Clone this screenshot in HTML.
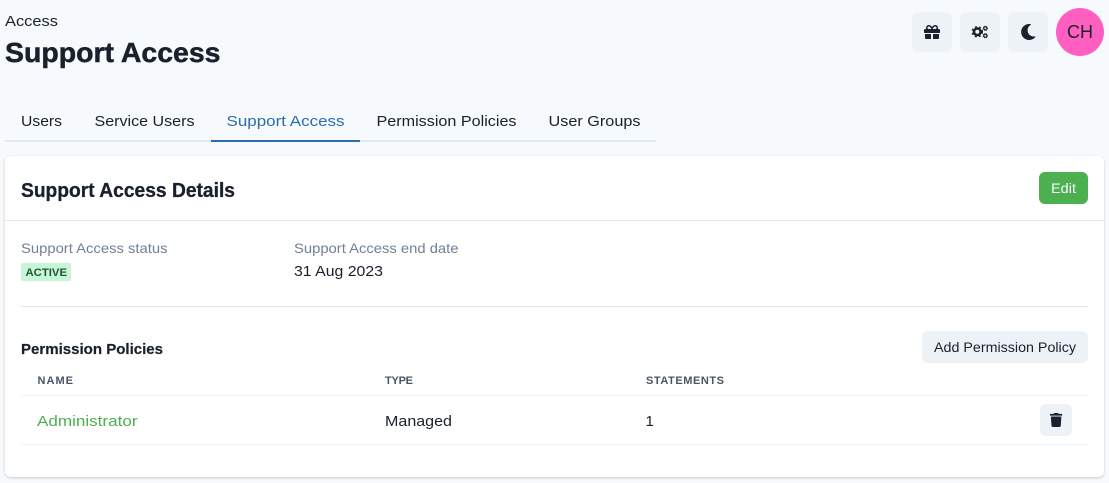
<!DOCTYPE html>
<html><head><meta charset="utf-8"><title>Support Access</title>
<style>
html,body{margin:0;padding:0;width:1109px;height:483px;overflow:hidden;background:#f7fafc;font-family:"Liberation Sans",sans-serif}
.b{position:absolute}
svg{position:absolute;left:0;top:0}
text{font-family:"Liberation Sans",sans-serif}
</style></head><body>
<div class="b" style="left:5px;top:156px;width:1099px;height:321px;background:#fff;border-radius:6px;box-shadow:0 1px 3px rgba(0,0,0,.14),0 1px 2px rgba(0,0,0,.06)"></div>
<div class="b" style="left:912px;top:12px;width:40px;height:40px;background:#edf2f7;border-radius:6px"></div>
<div class="b" style="left:960px;top:12px;width:40px;height:40px;background:#edf2f7;border-radius:6px"></div>
<div class="b" style="left:1008px;top:12px;width:40px;height:40px;background:#edf2f7;border-radius:6px"></div>
<div class="b" style="left:1056px;top:8px;width:48px;height:48px;background:#ff5fc0;border-radius:50%"></div>
<div class="b" style="left:5px;top:140px;width:651px;height:2px;background:#e2e8f0"></div>
<div class="b" style="left:211px;top:140px;width:149px;height:2px;background:#2b6cb0"></div>
<div class="b" style="left:5px;top:220px;width:1099px;height:1px;background:#e2e8f0"></div>
<div class="b" style="left:21px;top:306px;width:1067px;height:1px;background:#e2e8f0"></div>
<div class="b" style="left:21px;top:395px;width:1067px;height:1px;background:#edf2f7"></div>
<div class="b" style="left:21px;top:444px;width:1067px;height:1px;background:#edf2f7"></div>
<div class="b" style="left:1039px;top:172px;width:49px;height:32px;background:#4caf50;border-radius:6px"></div>
<div class="b" style="left:21px;top:263px;width:50px;height:18px;background:#c6f6d5;border-radius:2px"></div>
<div class="b" style="left:922px;top:331px;width:166px;height:32px;background:#edf2f7;border-radius:6px"></div>
<div class="b" style="left:1040px;top:404px;width:32px;height:32px;background:#edf2f7;border-radius:6px"></div>
<svg width="1109" height="483" viewBox="0 0 1109 483" xmlns="http://www.w3.org/2000/svg">
<g fill="#1a202c">
<text x="5" y="26" font-size="15" textLength="53" lengthAdjust="spacingAndGlyphs">Access</text>
<text x="5" y="62" font-size="28" font-weight="700" stroke="#1a202c" stroke-width=".5" textLength="215.500" lengthAdjust="spacingAndGlyphs">Support Access</text>
<text x="21" y="126" font-size="15" textLength="41" lengthAdjust="spacingAndGlyphs">Users</text>
<text x="94.500" y="126" font-size="15" textLength="100" lengthAdjust="spacingAndGlyphs">Service Users</text>
<text x="376.500" y="126" font-size="15" textLength="140" lengthAdjust="spacingAndGlyphs">Permission Policies</text>
<text x="548.500" y="126" font-size="15" textLength="92" lengthAdjust="spacingAndGlyphs">User Groups</text>
<text x="21" y="197" font-size="20" font-weight="700" stroke="#1a202c" stroke-width=".3" textLength="214" lengthAdjust="spacingAndGlyphs">Support Access Details</text>
<text x="294" y="276" font-size="15" textLength="89" lengthAdjust="spacingAndGlyphs">31 Aug 2023</text>
<text x="21" y="354" font-size="15" font-weight="700" stroke="#1a202c" stroke-width=".2" textLength="142" lengthAdjust="spacingAndGlyphs">Permission Policies</text>
<text x="934" y="352" font-size="14" textLength="142" lengthAdjust="spacingAndGlyphs">Add Permission Policy</text>
<text x="385" y="426" font-size="15" textLength="67" lengthAdjust="spacingAndGlyphs">Managed</text>
<text x="645.500" y="426" font-size="15">1</text>
<text x="1067" y="38" font-size="18" textLength="26" lengthAdjust="spacingAndGlyphs">CH</text>
</g>
<text x="226.500" y="126" font-size="15" fill="#2b6cb0" textLength="118" lengthAdjust="spacingAndGlyphs">Support Access</text>
<text x="1051" y="193" font-size="14" fill="#f7fafc" textLength="25" lengthAdjust="spacingAndGlyphs">Edit</text>
<text x="21" y="253" font-size="14" fill="#718096" textLength="146.500" lengthAdjust="spacingAndGlyphs">Support Access status</text>
<text x="294" y="253" font-size="14" fill="#718096" textLength="164.500" lengthAdjust="spacingAndGlyphs">Support Access end date</text>
<text x="25.500" y="276" font-size="11" font-weight="700" fill="#22543d" textLength="41.500" lengthAdjust="spacingAndGlyphs">ACTIVE</text>
<g fill="#4a5568" font-size="11" font-weight="700">
<text x="37.500" y="384" textLength="35.500" lengthAdjust="spacing">NAME</text>
<text x="385" y="384" textLength="28" lengthAdjust="spacing">TYPE</text>
<text x="646" y="384" textLength="78" lengthAdjust="spacing">STATEMENTS</text>
</g>
<text x="37" y="426" font-size="15" fill="#4caf50" textLength="100.500" lengthAdjust="spacingAndGlyphs">Administrator</text>

<svg x="924" y="24" width="16" height="16" viewBox="0 0 512 512"><path fill="#1a202c" d="M32 448c0 17.700 14.300 32 32 32h160V320H32v128zm256 32h160c17.700 0 32-14.300 32-32V320H288v160zm192-320h-42.100c6.200-12.100 10.100-25.500 10.100-40 0-48.500-39.500-88-88-88-41.600 0-68.500 21.300-103 68.300-34.500-47-61.400-68.300-103-68.300-48.500 0-88 39.500-88 88 0 14.500 3.800 27.900 10.100 40H32c-17.700 0-32 14.300-32 32v80c0 8.800 7.200 16 16 16h480c8.800 0 16-7.200 16-16v-80c0-17.700-14.300-32-32-32zm-326.100 0c-22.100 0-40-17.900-40-40s17.900-40 40-40c19.900 0 34.600 3.300 86.100 80h-86.100zm206.100 0h-86.100c51.400-76.500 65.700-80 86.100-80 22.100 0 40 17.900 40 40s-17.900 40-40 40z"/></svg>

<g fill="none" stroke="#1a202c">
<circle cx="977.300" cy="31.800" r="3.300" stroke-width="2.500"/>
<circle cx="977.300" cy="31.800" r="5" stroke-width="1.500" stroke-dasharray="2 2.190"/>
<circle cx="985.300" cy="28.300" r="1.500" stroke-width="1.100"/>
<circle cx="985.300" cy="28.300" r="2.300" stroke-width=".7" stroke-dasharray="1 .93"/>
<circle cx="985.300" cy="35.700" r="1.500" stroke-width="1.100"/>
<circle cx="985.300" cy="35.700" r="2.300" stroke-width=".7" stroke-dasharray="1 .93"/>
</g>

<svg x="1020.300" y="24" width="16" height="16" viewBox="0 0 512 512"><path fill="#1a202c" d="M283.211 512c78.962 0 151.079-35.925 198.857-94.792 7.068-8.708-.639-21.430-11.562-19.350-124.203 23.654-238.262-71.576-238.262-196.954 0-72.222 38.662-138.635 101.498-174.394 9.686-5.512 7.250-20.197-3.756-22.230A258.156 258.156 0 0 0 283.211 0c-141.309 0-256 114.511-256 256 0 141.309 114.511 256 256 256z"/></svg>

<svg x="1050" y="413" width="12.250" height="14" viewBox="0 0 448 512"><path fill="#1a202c" d="M432 32H312l-9.400-18.700A24 24 0 0 0 281.100 0H166.800a23.720 23.720 0 0 0-21.400 13.300L136 32H16A16 16 0 0 0 0 48v32a16 16 0 0 0 16 16h416a16 16 0 0 0 16-16V48a16 16 0 0 0-16-16zM53.200 467a48 48 0 0 0 47.900 45h245.800a48 48 0 0 0 47.900-45L416 128H32z"/></svg>
</svg>
</body></html>
